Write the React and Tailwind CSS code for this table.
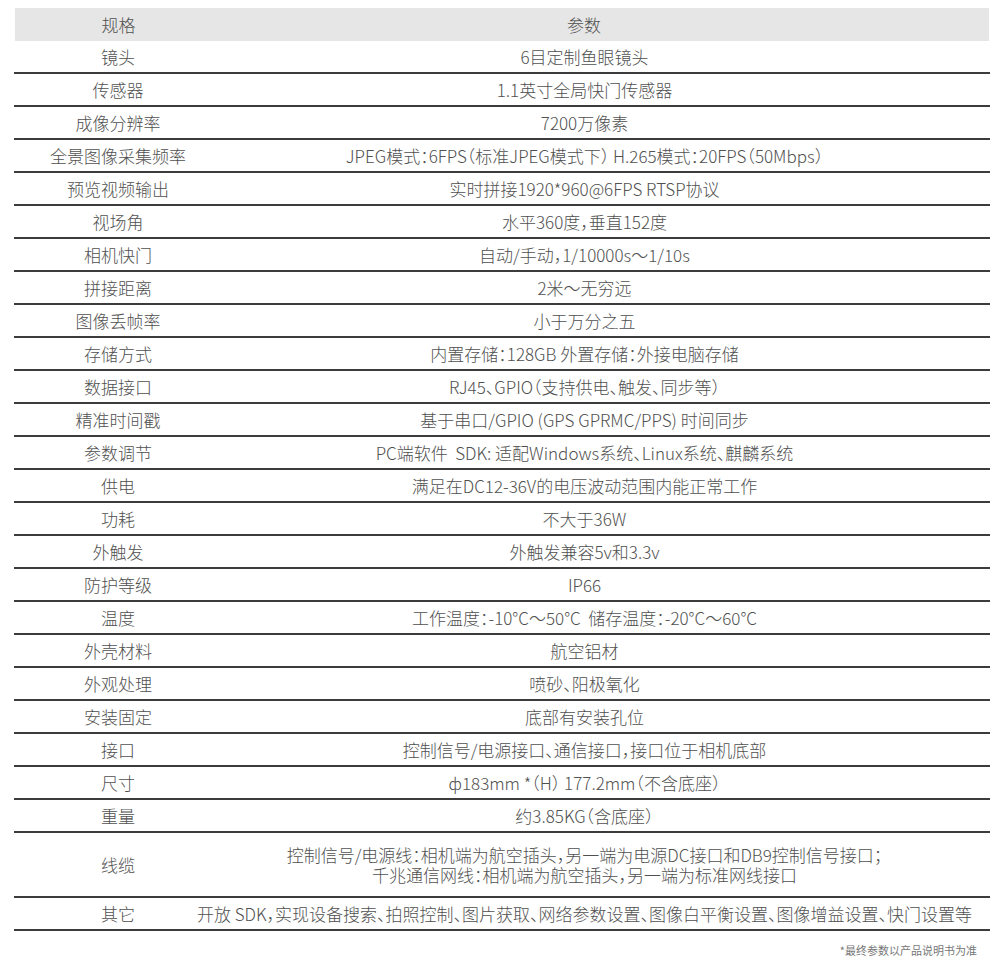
import React from 'react';

const rows = [
    ["镜头", "6目定制鱼眼镜头"],
    ["传感器", "1.1英寸全局快门传感器"],
    ["成像分辨率", "7200万像素"],
    ["全景图像采集频率", "JPEG模式：6FPS（标准JPEG模式下） H.265模式：20FPS（50Mbps）"],
    ["预览视频输出", "实时拼接1920*960@6FPS RTSP协议"],
    ["视场角", "水平360度，垂直152度"],
    ["相机快门", "自动/手动，1/10000s～1/10s"],
    ["拼接距离", "2米～无穷远"],
    ["图像丢帧率", "小于万分之五"],
    ["存储方式", "内置存储：128GB 外置存储：外接电脑存储"],
    ["数据接口", "RJ45、GPIO（支持供电、触发、同步等）"],
    ["精准时间戳", "基于串口/GPIO (GPS GPRMC/PPS) 时间同步"],
    ["参数调节", "PC端软件  SDK: 适配Windows系统、Linux系统、麒麟系统"],
    ["供电", "满足在DC12-36V的电压波动范围内能正常工作"],
    ["功耗", "不大于36W"],
    ["外触发", "外触发兼容5v和3.3v"],
    ["防护等级", "IP66"],
    ["温度", "工作温度：-10°C～50°C  储存温度：-20°C～60°C"],
    ["外壳材料", "航空铝材"],
    ["外观处理", "喷砂、阳极氧化"],
    ["安装固定", "底部有安装孔位"],
    ["接口", "控制信号/电源接口、通信接口，接口位于相机底部"],
    ["尺寸", "ф183mm *（H） 177.2mm（不含底座）"],
    ["重量", "约3.85KG（含底座）"],
];

const Row = ({label, children, tall}) => (
    <div className={"flex border-b-2 border-[#3c3c3c] " + (tall ? "h-[65px]" : "h-[33px]")}>
        <div className="w-[165px] pl-[43px] flex items-center justify-center whitespace-nowrap">{label}</div>
        <div className="flex-1 flex flex-col items-center justify-center whitespace-pre leading-[20px]">{children}</div>
    </div>
);

const App = () => {
    return (
        <div className="w-[1000px] h-[968px] bg-white pt-[8px] pl-[14px] pr-[10px] text-[17px] font-light text-[#505050] font-['Noto_Sans_CJK_SC','Noto_Sans',sans-serif] [font-feature-settings:'halt']">
            <div className="flex h-[33px] bg-[#e6e6e6] mx-[1px]">
                <div className="w-[164px] pl-[43px] flex items-center justify-center">规格</div>
                <div className="flex-1 flex items-center justify-center">参数</div>
            </div>
            <div>
                {rows.map(([label, value]) => (
                    <Row key={label} label={label}>{value}</Row>
                ))}
                <Row label="线缆" tall>
                    <span>控制信号/电源线：相机端为航空插头，另一端为电源DC接口和DB9控制信号接口；</span>
                    <span>千兆通信网线：相机端为航空插头，另一端为标准网线接口</span>
                </Row>
                <Row label="其它">开放 SDK，实现设备搜索、拍照控制、图片获取、网络参数设置、图像白平衡设置、图像增益设置、快门设置等</Row>
            </div>
            <div className="flex justify-end pr-[13px] pt-[11px] text-[11px] font-normal text-[#777]">*最终参数以产品说明书为准</div>
        </div>
    );
};

export default App;
